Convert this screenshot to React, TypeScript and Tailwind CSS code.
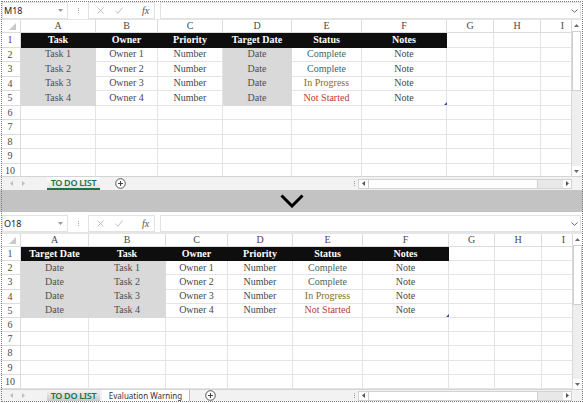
import React from "react";

type Cell = { t?: string; bg?: "dark" | "gray"; c?: string; handle?: boolean };
type Col = { l: string; w: string };

const topCols: Col[] = [
  { l: "A", w: "w-[75px]" },
  { l: "B", w: "w-[62px]" },
  { l: "C", w: "w-[65px]" },
  { l: "D", w: "w-[69px]" },
  { l: "E", w: "w-[70px]" },
  { l: "F", w: "w-[85px]" },
  { l: "G", w: "w-[47px]" },
  { l: "H", w: "w-[47px]" },
  { l: "I", w: "w-[44px]" },
];

const botCols: Col[] = [
  { l: "A", w: "w-[68px]" },
  { l: "B", w: "w-[77px]" },
  { l: "C", w: "w-[62px]" },
  { l: "D", w: "w-[65px]" },
  { l: "E", w: "w-[70px]" },
  { l: "F", w: "w-[86px]" },
  { l: "G", w: "w-[46px]" },
  { l: "H", w: "w-[47px]" },
  { l: "I", w: "w-[44px]" },
];

const statuses = [
  { t: "Complete", c: "text-[#3b6a64]" },
  { t: "Complete", c: "text-[#3b6a64]" },
  { t: "In Progress", c: "text-[#8a6c22]" },
  { t: "Not Started", c: "text-[#b83c36]" },
];

const empty = (): Cell[] => Array.from({ length: 9 }, () => ({}));

const topRows: Cell[][] = [
  [
    { t: "Task", bg: "dark" },
    { t: "Owner", bg: "dark" },
    { t: "Priority", bg: "dark" },
    { t: "Target Date", bg: "dark" },
    { t: "Status", bg: "dark" },
    { t: "Notes", bg: "dark" },
    {},
    {},
    {},
  ],
  ...[1, 2, 3, 4].map((i) => [
    { t: `Task ${i}`, bg: "gray" as const },
    { t: `Owner ${i}` },
    { t: "Number" },
    { t: "Date", bg: "gray" as const },
    { t: statuses[i - 1].t, c: statuses[i - 1].c },
    { t: "Note", handle: i === 4 },
    {},
    {},
    {},
  ]),
  empty(),
  empty(),
  empty(),
  empty(),
  empty(),
];

const botRows: Cell[][] = [
  [
    { t: "Target Date", bg: "dark" },
    { t: "Task", bg: "dark" },
    { t: "Owner", bg: "dark" },
    { t: "Priority", bg: "dark" },
    { t: "Status", bg: "dark" },
    { t: "Notes", bg: "dark" },
    {},
    {},
    {},
  ],
  ...[1, 2, 3, 4].map((i) => [
    { t: "Date", bg: "gray" as const },
    { t: `Task ${i}`, bg: "gray" as const },
    { t: `Owner ${i}` },
    { t: "Number" },
    { t: statuses[i - 1].t, c: statuses[i - 1].c },
    { t: "Note", handle: i === 4 },
    {},
    {},
    {},
  ]),
  empty(),
  empty(),
  empty(),
  empty(),
  empty(),
];

const serif = "font-['Liberation_Serif',serif]";
const sans = "font-['Noto_Sans',sans-serif]";

function FormulaBar({ name }: { name: string }) {
  return (
    <div className="flex h-[17px] shrink-0 items-stretch bg-white">
      <div className="ml-[2px] flex w-[66px] items-center justify-between border border-[#e2e2e2] bg-white pl-[1px] pr-[4px]">
        <span className={`${sans} text-[9px] leading-none text-[#222]`}>{name}</span>
        <svg width="5" height="3" viewBox="0 0 5 3">
          <path d="M0 0 L5 0 L2.5 3 Z" fill="#9a9a9a" />
        </svg>
      </div>
      <div className="flex w-[20px] flex-col items-center justify-center gap-[1px]">
        <span className="h-[1px] w-[1px] bg-[#a8a8a8]" />
        <span className="h-[1px] w-[1px] bg-[#a8a8a8]" />
        <span className="h-[1px] w-[1px] bg-[#a8a8a8]" />
      </div>
      <div className="flex w-[67px] items-center border border-[#e2e2e2] bg-white">
        <svg className="ml-[8px]" width="7" height="7" viewBox="0 0 7 7">
          <path d="M0.5 0.5 L6.5 6.5 M6.5 0.5 L0.5 6.5" stroke="#b8b8b8" strokeWidth="0.9" />
        </svg>
        <svg className="ml-[11px]" width="8" height="7" viewBox="0 0 8 7">
          <path d="M0.5 4 L3 6.3 L7.5 0.5" stroke="#b8b8b8" strokeWidth="0.9" fill="none" />
        </svg>
        <span className={`${serif} ml-[19px] text-[10px] italic leading-none text-[#555]`}>fx</span>
      </div>
      <div className="ml-[5px] flex flex-1 items-center justify-end border border-[#e2e2e2] bg-white pr-[2px]">
        <svg width="7" height="4" viewBox="0 0 7 4">
          <path d="M0.5 0.5 L3.5 3.3 L6.5 0.5" stroke="#6a6a6a" strokeWidth="1" fill="none" />
        </svg>
      </div>
      <div className="w-[2px]" />
    </div>
  );
}

function VScroll() {
  return (
    <div className="flex w-[10px] shrink-0 flex-col border-l border-[#d8d8d8] bg-[#eeeeee]">
      <div className="flex h-[11px] items-center justify-center bg-white">
        <svg width="5" height="3" viewBox="0 0 5 3">
          <path d="M0 3 L5 3 L2.5 0 Z" fill="#6a6a6a" />
        </svg>
      </div>
      <div className="h-[60px] border border-[#cfcfcf] bg-white" />
      <div className="flex-1" />
      <div className="flex h-[10px] items-center justify-center bg-white">
        <svg width="5" height="3" viewBox="0 0 5 3">
          <path d="M0 0 L5 0 L2.5 3 Z" fill="#6a6a6a" />
        </svg>
      </div>
    </div>
  );
}

function Grid({ cols, rows, rowH }: { cols: Col[]; rows: Cell[][]; rowH: string }) {
  return (
    <div className="flex min-w-0 flex-1 flex-col overflow-hidden">
      <div className="flex h-[13px] shrink-0">
        <div className="relative h-full w-[21px] shrink-0 border-r border-b border-[#dcdcdc] bg-white">
          <svg className="absolute right-[4px] bottom-[2px]" width="7" height="7" viewBox="0 0 7 7">
            <path d="M7 0 L7 7 L0 7 Z" fill="#c9c9c9" />
          </svg>
        </div>
        {cols.map((c) => (
          <div
            key={c.l}
            className={`${c.w} ${serif} flex h-full shrink-0 items-center justify-center border-r border-b border-[#dcdcdc] bg-white text-[10px] leading-none text-[#4a4a4a]`}
          >
            {c.l}
          </div>
        ))}
      </div>
      {rows.map((r, ri) => (
        <div key={ri} className={`flex ${rowH} shrink-0`}>
          <div
            className={`${serif} flex h-full w-[21px] shrink-0 items-center justify-center border-r border-b border-[#dcdcdc] bg-white pt-[1px] text-[10px] leading-none text-[#4a4a4a]`}
          >
            {ri + 1}
          </div>
          {r.map((cell, ci) => {
            const look =
              cell.bg === "dark"
                ? "bg-[#0e0e0e] border-[#0e0e0e] text-white font-bold"
                : cell.bg === "gray"
                ? "bg-[#d9d9d9] border-[#d9d9d9] text-[#4f4f4f]"
                : `bg-white border-[#e4e4e4] ${cell.c ?? "text-[#474747]"}`;
            return (
              <div
                key={ci}
                className={`${cols[ci].w} ${look} ${serif} relative flex h-full shrink-0 items-center justify-center overflow-visible whitespace-nowrap border-r border-b text-[10px] leading-none`}
              >
                {cell.t}
                {cell.handle && (
                  <svg className="absolute right-[-1px] bottom-[0px]" width="3" height="3" viewBox="0 0 3 3">
                    <path d="M3 0 L3 3 L0 3 Z" fill="#2f4fb8" />
                  </svg>
                )}
              </div>
            );
          })}
        </div>
      ))}
    </div>
  );
}

function HScroll() {
  return (
    <div className="flex h-[10px] w-[214px] items-stretch border border-[#d2d2d2] bg-[#e8e8e8]">
      <div className="flex w-[9px] items-center justify-center bg-white">
        <svg width="3" height="5" viewBox="0 0 3 5">
          <path d="M3 0 L3 5 L0 2.5 Z" fill="#555" />
        </svg>
      </div>
      <div className="w-[170px] border-x border-[#cfcfcf] bg-white" />
      <div className="flex-1" />
      <div className="flex w-[8px] items-center justify-center bg-white">
        <svg width="3" height="5" viewBox="0 0 3 5">
          <path d="M0 0 L0 5 L3 2.5 Z" fill="#555" />
        </svg>
      </div>
    </div>
  );
}

function NavArrows() {
  return (
    <div className="flex w-[47px] shrink-0 items-center gap-[9px] pl-[10px]">
      <svg width="3" height="5" viewBox="0 0 3 5">
        <path d="M3 0 L3 5 L0 2.5 Z" fill="#bdbdbd" />
      </svg>
      <svg width="3" height="5" viewBox="0 0 3 5">
        <path d="M0 0 L0 5 L3 2.5 Z" fill="#bdbdbd" />
      </svg>
    </div>
  );
}

function PlusCircle() {
  return (
    <svg width="11" height="11" viewBox="0 0 11 11">
      <circle cx="5.5" cy="5.5" r="4.8" stroke="#555" strokeWidth="1" fill="white" />
      <path d="M5.5 3 L5.5 8 M3 5.5 L8 5.5" stroke="#444" strokeWidth="1.1" />
    </svg>
  );
}

function Dots3() {
  return (
    <div className="flex w-[8px] flex-col items-center justify-center gap-[1px]">
      <span className="h-[1px] w-[1px] bg-[#9a9a9a]" />
      <span className="h-[1px] w-[1px] bg-[#9a9a9a]" />
      <span className="h-[1px] w-[1px] bg-[#9a9a9a]" />
    </div>
  );
}

function TopTabs() {
  return (
    <div className="flex h-[14px] shrink-0 items-center border-t border-[#d4d4d4] bg-[#f2f2f2]">
      <NavArrows />
      <div
        className={`${sans} flex h-full w-[53px] items-center justify-center border-b-2 border-[#217346] bg-gradient-to-b from-white to-[#e4e4e4] text-[9px] font-semibold leading-none tracking-[-0.3px] text-[#217346]`}
      >
        TO DO LIST
      </div>
      <div className="w-[15px]" />
      <PlusCircle />
      <div className="flex-1" />
      <Dots3 />
      <HScroll />
      <div className="w-[11px]" />
    </div>
  );
}

function BottomTabs() {
  return (
    <div className="flex h-[12px] shrink-0 items-center border-t border-[#d4d4d4] bg-[#f2f2f2]">
      <NavArrows />
      <div
        className={`${sans} flex h-full w-[53px] items-center justify-center bg-gradient-to-b from-[#f4f4f4] to-[#c9c9c9] text-[9px] font-semibold leading-none tracking-[-0.3px] text-[#217346]`}
      >
        TO DO LIST
      </div>
      <div
        className={`${sans} ml-[2px] flex h-full w-[88px] items-center justify-center border-r border-[#bdbdbd] bg-white text-[8px] leading-none text-[#333]`}
      >
        Evaluation Warning
      </div>
      <div className="w-[15px]" />
      <PlusCircle />
      <div className="flex-1" />
      <Dots3 />
      <HScroll />
      <div className="w-[11px]" />
    </div>
  );
}

export default function App() {
  return (
    <div className="relative flex h-[403px] w-[583px] flex-col overflow-hidden bg-white">
      {/* top pane */}
      <div className="flex h-[190px] shrink-0 flex-col pt-[2px]">
        <FormulaBar name="M18" />
        <div className="h-[1px] shrink-0 bg-[#e6e6e6]" />
        <div className="flex min-h-0 flex-1">
          <Grid cols={topCols} rows={topRows} rowH="h-[14.5px]" />
          <VScroll />
          <div className="w-[2px] shrink-0" />
        </div>
        <TopTabs />
      </div>

      {/* divider */}
      <div className="flex h-[22px] shrink-0 items-center justify-center bg-[#c3c3c3]">
        <svg width="24" height="14" viewBox="0 0 24 14">
          <path d="M1.5 1.5 L12 12 L22.5 1.5" stroke="#000" strokeWidth="3" fill="none" />
        </svg>
      </div>

      {/* bottom pane */}
      <div className="flex min-h-0 flex-1 flex-col pt-[3px] pb-[2px]">
        <FormulaBar name="O18" />
        <div className="h-[2px] shrink-0 bg-[#e6e6e6]" />
        <div className="flex min-h-0 flex-1">
          <Grid cols={botCols} rows={botRows} rowH="h-[14.2px]" />
          <VScroll />
          <div className="w-[1px] shrink-0" />
        </div>
        <BottomTabs />
      </div>

      <div className="pointer-events-none absolute top-px left-px right-0 bottom-px border border-dotted border-[#7a7a7a]" />
    </div>
  );
}
